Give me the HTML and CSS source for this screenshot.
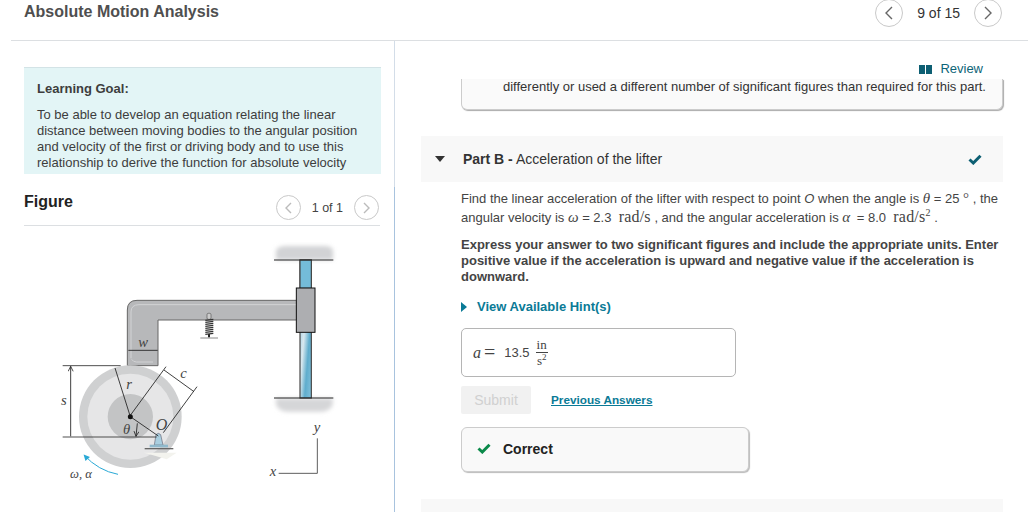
FILE: index.html
```html
<!DOCTYPE html>
<html lang="en">
<head>
<meta charset="utf-8">
<title>Absolute Motion Analysis</title>
<link rel="stylesheet" href="styles.css">
</head>
<body>
<div class="page">
  <header class="top">
    <h1 class="title">Absolute Motion Analysis</h1>
    <nav class="pager">
      <span class="circle"><svg width="10" height="14" viewBox="0 0 10 14"><path d="M8 1 2 7l6 6" class="chev"/></svg></span>
      <span class="count">9 of 15</span>
      <span class="circle"><svg width="10" height="14" viewBox="0 0 10 14"><path d="M2 1l6 6-6 6" class="chev"/></svg></span>
    </nav>
  </header>
  <main class="main">
    <section class="left">
      <div class="intro">
        <div class="goal">
          <p class="goal-head">Learning Goal:</p>
          <p class="goal-text">To be able to develop an equation relating the linear distance between moving bodies to the angular position and velocity of the first or driving body and to use this relationship to derive the function for absolute velocity and acceleration of the second body.</p>
        </div>
      </div>
      <div class="figure">
        <div class="fig-head">
          <h2 class="fig-title">Figure</h2>
          <div class="fig-pager">
            <span class="circle small"><svg width="8" height="12" viewBox="0 0 8 12"><path d="M7 1 2 6l5 5" class="chev faint"/></svg></span>
            <span class="fig-count">1 of 1</span>
            <span class="circle small"><svg width="8" height="12" viewBox="0 0 8 12"><path d="M1 1l5 5-5 5" class="chev faint"/></svg></span>
          </div>
        </div>
        <svg class="diagram" width="340" height="282" viewBox="0 0 1020 846">
          <defs>
            <filter id="soft" x="-20%" y="-40%" width="140%" height="180%"><feGaussianBlur stdDeviation="6"/></filter>
            <linearGradient id="rod" x1="0" y1="0" x2="1" y2="1">
              <stop offset="0" stop-color="#7fc0dc"/><stop offset=".45" stop-color="#d8e8ef"/><stop offset=".7" stop-color="#5fadcd"/><stop offset="1" stop-color="#83c2dc"/>
            </linearGradient>
            <marker id="ah" viewBox="0 0 12 12" refX="11" refY="6" markerWidth="18" markerHeight="18" markerUnits="userSpaceOnUse" orient="auto-start-reverse">
              <path d="M1 1 11 6 1 11" fill="none" stroke="#222" stroke-width="1.6"/>
            </marker>
            <marker id="bh" viewBox="0 0 12 12" refX="10" refY="6" markerWidth="22" markerHeight="22" markerUnits="userSpaceOnUse" orient="auto">
              <path d="M1 1 11 6 1 11z" fill="#29a9d6"/>
            </marker>
          </defs>
          <path d="M768 90V60q8-12 30-12h115q22 0 26 12v30z" fill="#d2d3d5" filter="url(#soft)"/>
          <path d="M768 505h170v20q-10 20-35 20h-100q-25 0-35-20z" fill="#d5d6d8" filter="url(#soft)"/>
          <rect x="840" y="90" width="34" height="414" fill="url(#rod)" stroke="#444" stroke-width="3.5"/>
          <rect x="840" y="90" width="34" height="85" fill="#74bcd9" stroke="#444" stroke-width="3.5"/>
          <path d="M762 90H940M762 504H940" stroke="#222" stroke-width="3"/>
          <path d="M322 407V240q0-29 29-29H830V270H414V407z" fill="#b7b8ba" stroke="#666" stroke-width="3"/>
          <path d="M333 385V246q0-22 24-22H830" fill="none" stroke="#d2d3d5" stroke-width="3"/>
          <path d="M335 388q5 8 14 8h50" fill="none" stroke="#d2d3d5" stroke-width="3"/>
          <rect x="829" y="174" width="56" height="133" fill="#adaeb1" stroke="#111" stroke-width="3"/>
          <path d="M541 324H594" stroke="#888" stroke-width="3"/>
          <path d="M567 312V322" stroke="#222" stroke-width="6"/>
          <rect x="561" y="250" width="12" height="18" rx="4" fill="#ccc" stroke="#555" stroke-width="2"/>
          <path d="M556 271l24-3M556 277l24-3M556 283l24-3M556 289l24-3M556 295l24-3M556 301l24-3M556 307l24-3M556 313l24-3" stroke="#333" stroke-width="3.5"/>
          <circle cx="331" cy="560" r="154" fill="#cfd0d1"/>
          <circle cx="331" cy="560" r="129" fill="#e6e6e7"/>
          <circle cx="331" cy="560" r="68" fill="#c3c4c5"/>
          <path d="M372 668H470L440 688Q410 678 372 668z" fill="#f3f3ee"/>
          <path d="M403 645 408 614q7-8 14 0l7 31z" fill="#a9cfe0" stroke="#667" stroke-width="2"/>
          <path d="M389 644H444V652H389z" fill="#8fb9cc"/>
          <path d="M374 656H460" stroke="#666" stroke-width="4"/>
          <path d="M128 407H302M128 621H410" stroke="#333" stroke-width="2.6"/>
          <path d="M152 409V619M325 361H413M432 420 522 485M285 414 331 560M352 580 348 619" fill="none" stroke="#222" stroke-width="2.6" marker-start="url(#ah)" marker-end="url(#ah)"/>
          <path d="M331 556 438 410M430 608 531 470M331 560 415 618" fill="none" stroke="#222" stroke-width="2.6"/>
          <circle cx="331" cy="560" r="7.5" fill="#111"/>
          <path d="M294 733Q235 722 192 675" fill="none" stroke="#29a9d6" stroke-width="3" marker-end="url(#bh)"/>
          <path d="M776 730H892V625" fill="none" stroke="#333" stroke-width="2.4"/>
          <g class="labels">
            <text x="123" y="525">s</text>
            <text x="319" y="476">r</text>
            <text x="481" y="445">c</text>
            <text x="355" y="350">w</text>
            <text x="309" y="612">θ</text>
            <text x="407" y="599" class="big">O</text>
            <text x="150" y="743" class="small-label">ω, α</text>
            <text x="881" y="605">y</text>
            <text x="749" y="738">x</text>
          </g>
        </svg>
      </div>
    </section>
    <section class="right">
      <div class="review-row">
        <a class="review"><svg width="13" height="9" viewBox="0 0 13 9"><path d="M0 0h6v9H0zM7 0h6v9H7z" fill="#0d5f73"/></svg>Review</a>
      </div>
      <div class="feedback-clip">
        <div class="feedback">differently or used a different number of significant figures than required for this part.</div>
      </div>
      <div class="part-bar">
        <span class="caret-down"></span>
        <span class="part-name"><b>Part B -</b> Acceleration of the lifter</span>
        <svg class="tick" width="14" height="11" viewBox="0 0 14 11"><path d="M1.5 5.5 5.3 9 12.5 1.8" fill="none" stroke="#0d5f73" stroke-width="3"/></svg>
      </div>
      <div class="part-body">
        <p class="prompt">Find the linear acceleration of the lifter with respect to point <i>O</i> when the angle is <i class="m">θ</i> = 25 <span class="m">°</span> , the angular velocity is <i class="m">ω</i> = 2.3 &nbsp;<span class="m unit">rad/s</span> , and the angular acceleration is <i class="m alpha">α</i> = 8.0 &nbsp;<span class="m unit">rad/s<sup>2</sup></span> .</p>
        <p class="express">Express your answer to two significant figures and include the appropriate units. Enter positive value if the acceleration is upward and negative value if the acceleration is downward.</p>
        <a class="hints"><span class="caret-right"></span>View Available Hint(s)</a>
        <div class="answer">
          <i class="m var">a</i><span class="m eq">=</span><span class="val">13.5</span>
          <span class="frac m"><span class="num">in</span><span class="den">s<sup>2</sup></span></span>
        </div>
        <div class="actions">
          <span class="submit">Submit</span>
          <a class="prev">Previous Answers</a>
        </div>
        <div class="correct">
          <svg width="14" height="11" viewBox="0 0 14 11"><path d="M1.5 5.5 5.3 9 12.5 1.8" fill="none" stroke="#0b8a4a" stroke-width="3"/></svg>
          <b>Correct</b>
        </div>
      </div>
      <div class="next-bar"></div>
    </section>
  </main>
</div>
</body>
</html>
```
FILE: styles.css
```css
* { box-sizing: border-box; }
html, body { margin: 0; padding: 0; }
body { font-family: "Liberation Sans", Arial, sans-serif; color: #333; background: #fff; overflow: hidden; }
p, h1, h2 { margin: 0; }
.page { width: 1031px; height: 512px; overflow: hidden; display: flex; flex-direction: column; }

.top { height: 41px; margin: 0 3px 0 11px; padding: 0 26px 0 13px; border-bottom: 1px solid #dcdfe2; display: flex; justify-content: space-between; align-items: flex-start; flex: none; }
.title { font-size: 16px; line-height: 23px; font-weight: 700; color: #4f4f4f; }
.pager { display: flex; align-items: center; gap: 14px; margin-top: -1px; font-size: 14px; color: #333; }
.circle { width: 28px; height: 28px; border-radius: 50%; border: 1px solid #c9c9c9; display: flex; align-items: center; justify-content: center; }
.circle.small { width: 25px; height: 25px; }
.chev { fill: none; stroke: #666; stroke-width: 1.4; }
.chev.faint { stroke: #bbb; }

.main { flex: 1; display: flex; min-height: 0; }
.left { width: 395px; flex: none; display: flex; flex-direction: column; }
.intro { height: 146px; flex: none; padding: 26px 13px 0 24px; border-right: 1px solid #d3dde8; }
.goal { height: 107px; overflow: hidden; background: #e3f5f6; border-top: 1px solid #d3e3e6; padding: 13px 13px 0; font-size: 13px; line-height: 16px; color: #3d3d3d; }
.goal-head { font-weight: 700; margin-bottom: 10px; }
.figure { flex: 1; padding: 0 14px 0 24px; border-right: 1px solid #a8c3de; min-height: 0; }
.fig-head { height: 39px; border-bottom: 1px solid #dcdfe2; display: flex; justify-content: space-between; align-items: flex-start; }
.fig-title { font-size: 16px; line-height: 18px; margin-top: 6px; font-weight: 700; color: #222; }
.fig-pager { display: flex; align-items: center; gap: 11px; margin-top: 8px; margin-right: 1px; font-size: 12.5px; color: #444; }
.diagram { display: block; margin: 4px 0 0 -4px; }
.labels text { font-family: "Liberation Serif", serif; font-style: italic; font-size: 44px; fill: #444; }
.labels .big { font-size: 48px; }
.labels .small-label { font-size: 38px; }

.right { flex: 1; min-width: 0; padding: 0 28px 0 26px; display: flex; flex-direction: column; }
.review-row { height: 38px; display: flex; justify-content: flex-end; align-items: flex-end; padding: 0 20px 2px 0; flex: none; }
.review { display: flex; align-items: center; gap: 8px; font-size: 13px; line-height: 16px; color: #0d6477; }
.feedback-clip { height: 31px; margin-left: 40px; flex: none; }
.feedback { height: 31px; padding: 1px 4px 0 41px; line-height: 14px; font-size: 13px; color: #333; background: #fafafa; border: 1px solid #ccc; border-top: 0; border-radius: 0 0 6px 6px; box-shadow: 1px 1px 1px #aaa; }
.part-bar { height: 46px; margin-top: 26px; background: #f8f8f8; display: flex; align-items: center; padding: 0 21px 0 14px; flex: none; font-size: 14px; color: #333; }
.caret-down { width: 0; height: 0; border: 5px solid transparent; border-top: 6px solid #333; border-bottom: 0; margin-right: 18px; }
.part-name { flex: 1; }
.part-body { padding: 0 0 0 40px; font-size: 13px; flex: none; }
.prompt { margin-top: 7px; line-height: 18px; color: #444; }
.m { font-family: "Liberation Serif", serif; }
.prompt .m { font-size: 15px; }
.prompt .unit { font-size: 16px; letter-spacing: .2px; }
.prompt .alpha { margin-right: 3px; }
.prompt sup { font-size: 10px; line-height: 0; }
.express { margin-top: 10px; font-weight: 700; line-height: 16px; color: #444; }
.hints { display: flex; align-items: center; margin-top: 14px; line-height: 16px; font-weight: 700; color: #0a7a96; }
.caret-right { width: 0; height: 0; border: 5px solid transparent; border-left: 6px solid #0a7a96; border-right: 0; margin-right: 10px; }
.answer { width: 275px; height: 49px; margin-top: 13px; border: 1px solid #b5b5b5; border-radius: 5px; display: flex; align-items: center; padding-left: 11px; color: #444; }
.var { font-size: 16px; margin-right: 3px; }
.eq { font-size: 20px; margin-right: 9px; }
.val { margin-right: 6px; }
.frac { display: inline-flex; flex-direction: column; align-items: center; font-size: 13px; line-height: 13px; }
.num { border-bottom: 1px solid #444; padding: 0 1px 1px; }
.den { padding-top: 1px; }
.den sup { font-size: 9px; line-height: 0; }
.actions { display: flex; align-items: center; margin-top: 9px; gap: 20px; }
.submit { width: 70px; height: 28px; background: #f1f1f1; border-radius: 2px; color: #d0d0d0; font-size: 14px; display: flex; align-items: center; justify-content: center; }
.prev { font-size: 11.75px; font-weight: 700; color: #0a7a96; text-decoration: underline; padding-bottom: 2px; }
.correct { width: 288px; height: 45px; margin-top: 13px; border: 1px solid #ccc; border-radius: 6px; background: #f9f9f9; box-shadow: 1px 1px 1px #bbb; display: flex; align-items: center; gap: 12px; padding: 0 0 2px 15px; font-size: 14px; color: #222; }
.next-bar { height: 13px; flex: none; margin-top: 27px; background: #f8f8f8; }
```
